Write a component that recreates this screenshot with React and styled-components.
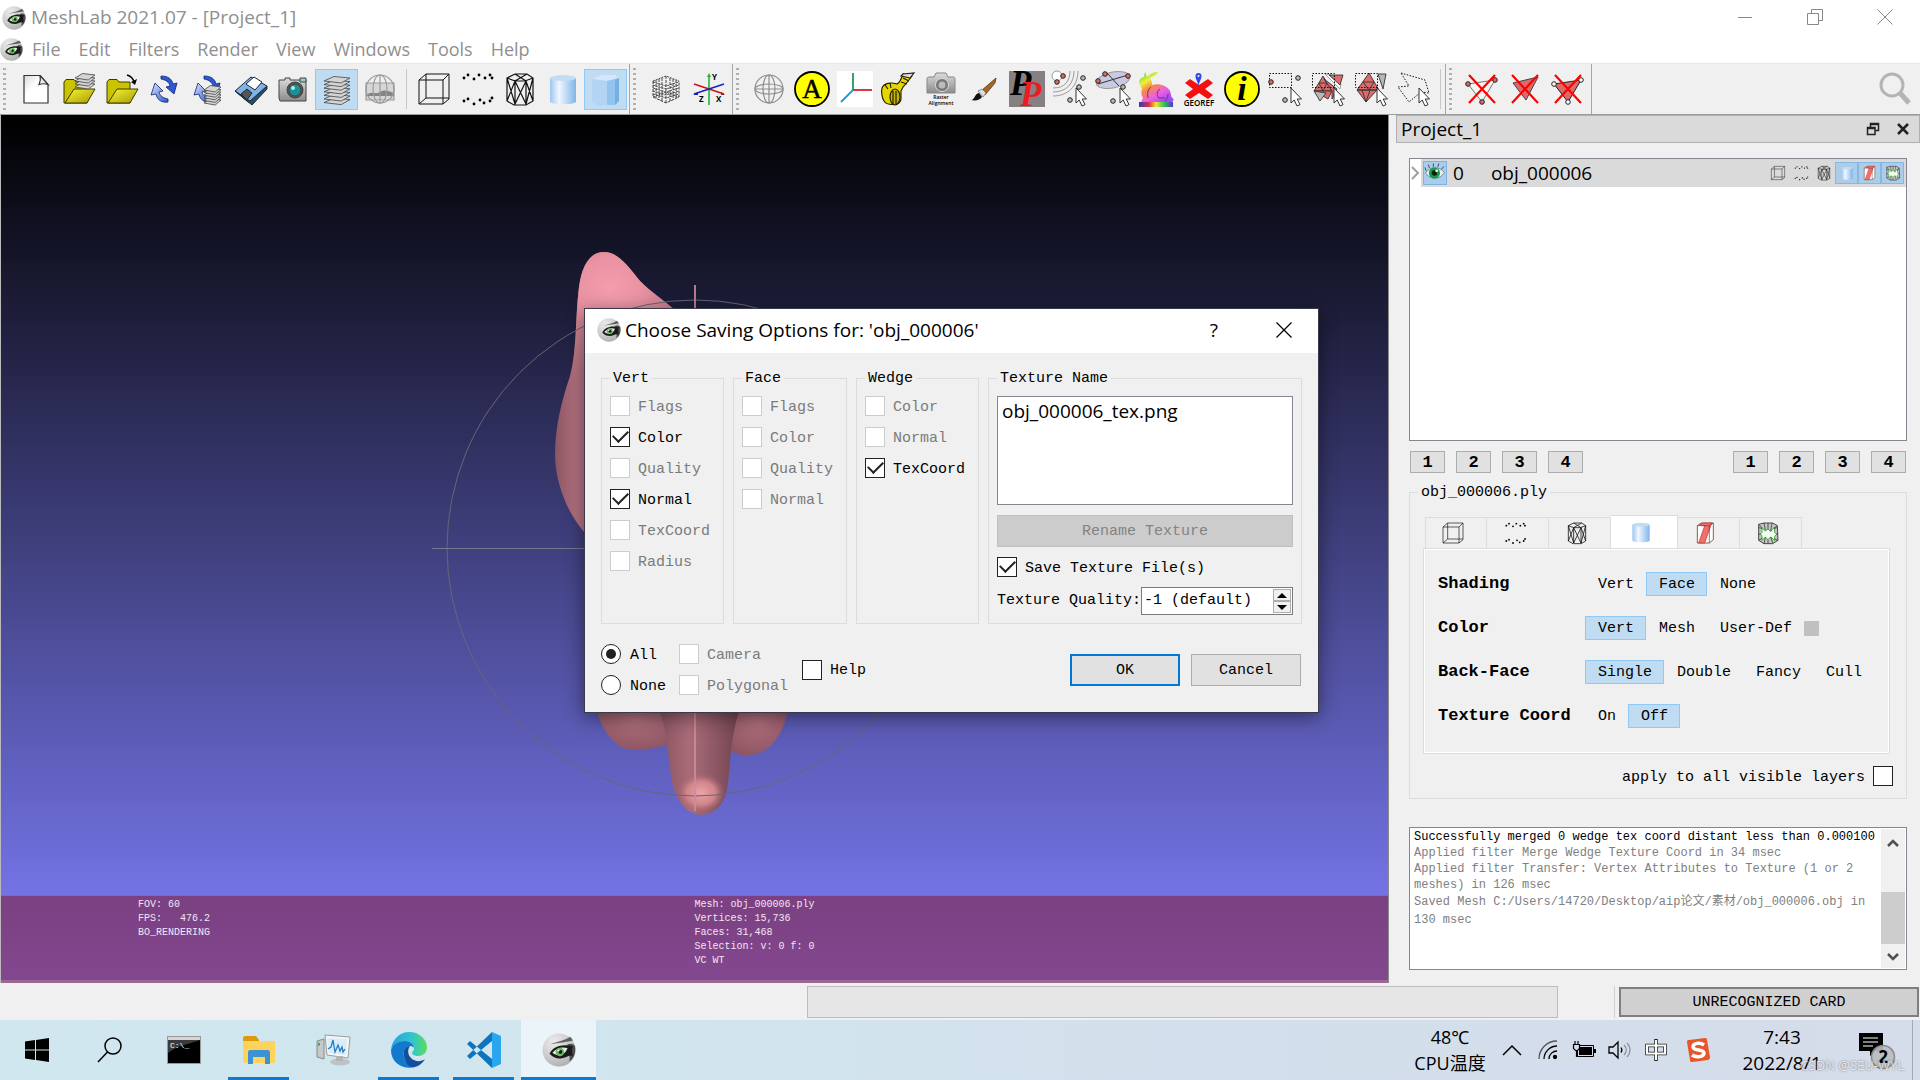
import { useState } from 'react';
import styled, { createGlobalStyle, css } from 'styled-components';

const GlobalStyle = createGlobalStyle`
  :root {
    --ff-ui: "Open Sans", "Noto Sans", "Noto Sans CJK SC", sans-serif;
    --ff-mono: "Liberation Mono", "Noto Sans CJK SC", monospace;
    --c-panel: #f0f0f0;
    --c-line: #dcdcdc;
    --c-select: #bfdcf3;
    --c-select-line: #90c8f6;
    --c-muted: #7b7b7b;
  }
  * {
    box-sizing: border-box;
  }
  body {
    margin: 0;
    background: var(--c-panel);
    color: #000;
    font: 15px/20px var(--ff-mono);
  }
  button, input {
    font: inherit;
    color: inherit;
    margin: 0;
  }
  svg {
    display: block;
    flex: none;
    overflow: visible;
  }
`;

/* ---------- shared drawings ---------- */

function EyeLogo({ size = 24 }) {
  return (
    <svg width={size} height={size} viewBox="0 0 36 36" aria-hidden="true">
      <defs>
        <radialGradient id="eyeSkin" cx=".35" cy=".25" r=".85">
          <stop offset="0" stopColor="#ececec" />
          <stop offset=".6" stopColor="#c9c9c9" />
          <stop offset="1" stopColor="#a9a9a9" />
        </radialGradient>
      </defs>
      <circle cx="18" cy="18" r="17.500" fill="url(#eyeSkin)" />
      <path d="M9 12C16 9 24 8 30 4l3 4c-7 2-15 2-24 4z" fill="#444" opacity=".8" />
      <path d="M27 12c4-1 6-1 8 2 1 7-1 13-6 16 1-5 0-8-3-10z" fill="#3a3a3a" opacity=".85" />
      <path d="M8 22c3-8 14-11 25-8-2 3-1 7 0 11-3-3-6 1-13 2-6 0-9-2-12-5z" fill="#1a1a1a" />
      <path d="M11 21c4-5 10-7 16-5-2 7-10 10-16 5z" fill="#e2eedf" />
      <circle cx="19" cy="20" r="4.500" fill="#6cb862" />
      <circle cx="19.500" cy="20" r="2" fill="#0c200c" />
      <circle cx="17.500" cy="18.500" r="1" fill="#fff" />
    </svg>
  );
}

const Pointer = ({ x = 24, y = 17 }) => (
  <path
    transform={`translate(${x} ${y})`}
    d="M0 0v15l3.200-3 2.800 6 3-1.400-2.800-5.600H10.500z"
    fill="#fff"
    stroke="#333"
    strokeWidth="1"
  />
);

const Node = ({ x, y, c = '#b8b8b8' }) => (
  <circle cx={x} cy={y} r="2.300" fill={c} stroke="#222" strokeWidth="1" />
);

const RED = '#dc6a6a';

const Sheets = ({ x = 0, y = 0, n = 6, step = 4, w = 26 }) => (
  <g transform={`translate(${x} ${y})`} fill="#d4d4d4" stroke="#444" strokeWidth=".8">
    {Array.from({ length: n }, (_, i) => n - 1 - i).map((i) => (
      <path key={i} d={`M0 ${i * step + 5}l${w * 0.38}-4.500L${w} ${i * step + 2}l${-w * 0.34} 5z`} />
    ))}
  </g>
);

const Folder = () => (
  <g stroke="#3a3a00" strokeWidth="1">
    <path d="M3 32V11l2-2.500h8l2 2.500h11v21z" fill="#c9c300" />
    <path d="M4 32l9-14h21l-8 14z" fill="url(#gold)" />
  </g>
);

const SyncArrows = () => (
  <g fill="url(#blueArrow)" stroke="#12236b" strokeWidth=".8">
    <path d="M14 5c7 0 11 3 12 8l4-1-3 11-8-7 4-1c-1-4-4-6-9-7z" fill="#2c58d6" />
    <path d="M21 31c-6 1-11-2-12-8l-5 1 4-12 8 8-4 1c1 4 4 6 9 7z" />
  </g>
);

const Cross = () => <path d="M5 4l26 28M31 4L5 32" stroke="#f00" strokeWidth="2.200" fill="none" />;

const Defs = styled.svg`
  position: absolute;
`;

function SharedGradients() {
  return (
    <Defs width="0" height="0" aria-hidden="true">
      <defs>
        <linearGradient id="gold" x1="0" y1="0" x2="1" y2="1">
          <stop offset="0" stopColor="#fbf53a" />
          <stop offset="1" stopColor="#a39d00" />
        </linearGradient>
        <linearGradient id="blueArrow" x1="0" y1="0" x2="1" y2="1">
          <stop offset="0" stopColor="#dbe8ff" />
          <stop offset="1" stopColor="#2a55cf" />
        </linearGradient>
        <linearGradient id="tube">
          <stop offset="0" stopColor="#9cc6ef" />
          <stop offset=".35" stopColor="#f0f7ff" />
          <stop offset="1" stopColor="#7fb5ea" />
        </linearGradient>
        <linearGradient id="rainbow">
          <stop offset="0" stopColor="#303bb5" />
          <stop offset=".3" stopColor="#e03050" />
          <stop offset=".5" stopColor="#f4e62a" />
          <stop offset=".75" stopColor="#2bc05a" />
          <stop offset="1" stopColor="#5a30c8" />
        </linearGradient>
        <linearGradient id="bunnyFill" x1="0" y1="0" x2=".7" y2="1">
          <stop offset="0" stopColor="#22d63c" />
          <stop offset=".3" stopColor="#f2ee3a" />
          <stop offset=".5" stopColor="#f58a4a" />
          <stop offset=".75" stopColor="#ef5fe0" />
          <stop offset="1" stopColor="#a04cf0" />
        </linearGradient>
        <linearGradient id="paper" x1="0" y1="0" x2="1" y2="1">
          <stop offset="0" stopColor="#d8d8d8" />
          <stop offset=".4" stopColor="#fff" />
        </linearGradient>
        <linearGradient id="metal" x1="0" y1="0" x2="0" y2="1">
          <stop offset="0" stopColor="#dcdcdc" />
          <stop offset="1" stopColor="#8c8c8c" />
        </linearGradient>
      </defs>
    </Defs>
  );
}

const art = {
  file: (
    <g stroke="#333" strokeWidth="1.200">
      <path d="M6 4.500h16l8 9v18.500H6z" fill="url(#paper)" />
      <path d="M22 4.500c1 4 0 7-1 9 3-1 6-1 9 0z" fill="#eee" />
    </g>
  ),
  openProject: (
    <>
      <Folder />
      <Sheets x={14} y={2} n={4} step={3} w={20} />
    </>
  ),
  importMesh: (
    <>
      <Folder />
      <path d="M23 4c4 1 6 3 7 7" fill="none" stroke="#000" strokeWidth="1.400" />
      <path d="M33 8l-2 6-4-3z" />
    </>
  ),
  reload: <SyncArrows />,
  reloadAll: (
    <>
      <SyncArrows />
      <Sheets x={14} y={14} n={6} step={2.6} w={17} />
    </>
  ),
  save: (
    <g stroke="#1c2a38" strokeWidth="1">
      <path d="M2 20L18 6l16 9-15 17-4-1z" fill="#7fb2e6" />
      <path d="M2 20l15 10 17-15v3L19 34z" fill="#2d4a66" />
      <path d="M13 13l8-7 8 5-7 8z" fill="#fff" />
      <path d="M8 23l6-5 5 4-5 7z" fill="#555" />
    </g>
  ),
  camera: (
    <g stroke="#444" strokeWidth="1">
      <path d="M3 9h6V7h5v2h16v21H4l-1-3z" fill="url(#metal)" />
      <path d="M24 7h6v4h-6z" fill="#8fd0c8" />
      <circle cx="19" cy="19" r="8" fill="#555" />
      <circle cx="19" cy="19" r="6" fill="#1e8f92" />
      <circle cx="17" cy="17" r="2" fill="#a9f0e8" stroke="none" />
    </g>
  ),
  layers: <Sheets x={5} y={5} n={7} step={3.6} />,
  rasterGlobe: (
    <g fill="none" stroke="#9a9a9a" strokeWidth="1.200">
      <path d="M4 12h28v17H4z" fill="#d6d6d6" />
      <path d="M4 24c7-5 9 0 14-3s8-1 14 1v3H4z" fill="#858585" stroke="none" />
      <circle cx="18" cy="18" r="14" />
      <ellipse cx="18" cy="18" rx="7" ry="14" />
      <path d="M18 4v28" />
    </g>
  ),
  box: (
    <path d="M3 9h24v24H3zM10 3h23v25M3 9l7-6M27 9l6-6M27 33l6-5M10 3v24h23M3 33l7-6" fill="none" stroke="#111" strokeWidth="1" />
  ),
  points: (
    <g fill="#000">
      {[[5, 7], [9, 4], [15, 8], [20, 4], [26, 7], [31, 4], [33, 7], [5, 30], [9, 28], [15, 33], [21, 29], [25, 32], [31, 30], [33, 27]].map(([x, y]) => (
        <circle key={`${x}-${y}`} cx={x} cy={y} r="1.400" />
      ))}
    </g>
  ),
  wire: (
    <path
      d="M5 7l8-4h12l6 4v23l-7 4H12l-7-4zM5 7l8 3h10l8-3M13 10v23M24 10v23M5 7l8 26L24 10l7 20M31 7l-7 26L13 10 5 30M13 3l11 7M25 3l-12 7"
      fill="none"
      stroke="#111"
      strokeWidth="1.200"
    />
  ),
  tube: (
    <>
      <path d="M5 7v24c3 3 23 3 26 0V7z" fill="url(#tube)" />
      <ellipse cx="18" cy="7" rx="13" ry="3" fill="#c3dcf6" />
    </>
  ),
  prism: (
    <>
      <path d="M4 8l9-4h14l4 3-12 3z" fill="#d3e6fa" />
      <path d="M4 8l15 2v24l-9 1-6-4z" fill="#b4d4f4" />
      <path d="M19 10l12-3v23l-4 4h-8z" fill="#93c3ef" />
      <path d="M27 9l4-2v23l-4 4z" fill="#78afe2" />
    </>
  ),
  grid: (
    <g fill="none" stroke="#333" strokeWidth=".9">
      <path d="M5 10v16l13 6 13-6V10M8 9v18M11 8v21M14 7v23M18 5v27M22 7v23M25 8v21M28 9v18" strokeDasharray="3 1" />
      <path d="M5 11l13 4 13-4M5 14l13 4 13-4M5 17l13 4 13-4M5 20l13 4 13-4M5 23l13 4 13-4M5 10l13-5 13 5M5 26l13-5 13 5" strokeDasharray="2 1" />
    </g>
  ),
  axes: (
    <g strokeWidth="1.600" fontSize="8" fontFamily="Open Sans, sans-serif" fontWeight="700">
      <path d="M18 4v30" stroke="#1fb53a" />
      <path d="M3 13l30 10" stroke="#c01818" />
      <path d="M33 13L3 23" stroke="#1e22c0" />
      <path d="M18 2l-2 4h4z" fill="#1fb53a" />
      <path d="M34 24l-4-3v3z" fill="#c01818" />
      <path d="M2 24l5-3v3z" fill="#1e22c0" />
      <text x="21" y="9">Y</text>
      <text x="25" y="31">X</text>
      <text x="8" y="31">Z</text>
    </g>
  ),
  globe: (
    <g fill="none" stroke="#8e8e8e" strokeWidth="1.200">
      <circle cx="18" cy="18" r="14" />
      <ellipse cx="18" cy="18" rx="6" ry="14" />
      <ellipse cx="18" cy="18" rx="14" ry="5" />
      <path d="M18 4v28M4 18h28" />
    </g>
  ),
  letterA: (
    <>
      <circle cx="18" cy="18" r="17" fill="#ff0" stroke="#000" strokeWidth="1.800" />
      <text x="18" y="27" textAnchor="middle" fontFamily="Liberation Serif, serif" fontSize="27" stroke="#000" strokeWidth=".5">A</text>
    </>
  ),
  triad: (
    <g fill="none" strokeWidth="1.800">
      <path d="M0 0h36v36H0z" fill="#fff" />
      <path d="M16 2v17" stroke="#1f9a55" />
      <path d="M16 19h19" stroke="#d8202c" />
      <path d="M16 19L4 31" stroke="#159be0" />
    </g>
  ),
  tape: (
    <g stroke="#1c1a00" strokeWidth="1.100">
      <path d="M2 17c2-5 9-6 15-4 4-2 4-6 6-10l9 2c-3 4-6 8-9 11l-2 4v8c0 7-14 7-17 2-2-3-3-9-2-13z" fill="#e6d600" />
      <ellipse cx="15" cy="26" rx="5" ry="8" fill="#c2b400" />
      <path d="M23 7l6 3M21 11l6 2M5 14l3 4M10 12l1 5M13 20v13M16 20v13" fill="none" />
      <path d="M23 3l11-1-4 5-9-2z" fill="#ddd" />
    </g>
  ),
  raster: (
    <>
      <path d="M4 8c0-2 1-2 3-2h4l2-4h10l2 4h4c2 0 3 0 3 2v14H4z" fill="url(#metal)" stroke="#888" />
      <circle cx="19" cy="14" r="6.500" fill="#777" stroke="#ddd" />
      <circle cx="19" cy="14" r="3.500" fill="#bbb" />
      <g fontFamily="Open Sans, sans-serif" fontSize="5" fontWeight="600" textAnchor="middle">
        <text x="18" y="28">Raster</text>
        <text x="18" y="34">Alignment</text>
      </g>
    </>
  ),
  brush: (
    <>
      <path d="M15 20L30 7l-1 5-10 12z" fill="#a5652a" stroke="#5a3210" strokeWidth=".8" />
      <path d="M12 20l4-2 4 4-3 4z" fill="#ddd" stroke="#777" strokeWidth=".8" />
      <path d="M5 29c4 0 3-6 8-7l3 4c-2 3-6 4-11 3z" fill="#111" />
    </>
  ),
  pp: (
    <g fontFamily="Liberation Serif, serif" fontWeight="700" fontStyle="italic">
      <path d="M0 0h36v36H0z" fill="#868083" />
      <text x="1" y="24" fontSize="35">P</text>
      <text x="11" y="35" fontSize="35" fill="#ec1c24">P</text>
    </g>
  ),
  paintPoints: (
    <>
      <g fill="none" stroke="#999" strokeWidth="1">
        <path d="M18 0c0 10-5 17-17 17M22 0c0 12-7 21-21 21M26 0c0 15-10 25-25 25" />
        <circle cx="5" cy="5" r="5" fill="#fff" />
      </g>
      <Node x={11} y={5} c={RED} />
      <Node x={5} y={11} c={RED} />
      <Node x={31} y={7} />
      <Node x={27} y={16} />
      <Node x={18} y={29} />
      <Pointer />
    </>
  ),
  fitPlane: (
    <>
      <ellipse cx="18" cy="9" rx="17" ry="8" transform="rotate(-12 18 9)" fill="#c9c9e2" stroke="#999" />
      <path d="M3 13l30-9M12 2l12 13" stroke="#333" fill="none" />
      <Node x={3} y={10} c={RED} />
      <Node x={10} y={3} c={RED} />
      <Node x={33} y={5} c={RED} />
      <Node x={28} y={16} />
      <Node x={18} y={30} />
      <Pointer x={25} />
    </>
  ),
  bunny: (
    <>
      <path
        d="M1 12c0-4 3-6 5-6l1-5 2 5c3-3 6-5 11-5-1 3-5 5-8 6 2 3 2 5 2 7 6-2 15 0 18 6 1 3 1 5 2 7 2 0 2 3 0 4H3l2-4c-2-3-2-6-1-9z"
        fill="url(#bunnyFill)"
      />
      <path d="M13 16c-3 2-4 6-3 11M22 18c-3 2-4 6-1 9h6M30 23c0 3-1 5-3 7" fill="none" stroke="#7a2c7a" strokeWidth="1" />
      <path d="M1 31h34v5H1z" fill="url(#rainbow)" />
    </>
  ),
  georef: (
    <>
      <path d="M9 8l9 6 9-6 5 4-8 6 8 6-5 4-9-6-9 6-5-4 8-6-8-6z" fill="#f50f0f" />
      <path d="M17.500 15c-1-5-3-7-3-10a3 3 0 016 0c0 3-2 5-3 10z" fill="#2c49e8" />
      <circle cx="17.500" cy="5" r="1" fill="#fff" />
      <text x="18" y="35" textAnchor="middle" fontFamily="Open Sans, sans-serif" fontSize="8" fontWeight="600">GEOREF</text>
    </>
  ),
  info: (
    <>
      <circle cx="18" cy="18" r="17" fill="#ff0" stroke="#000" strokeWidth="1.800" />
      <text x="18" y="29" textAnchor="middle" fontFamily="Liberation Serif, serif" fontSize="34" fontWeight="700" fontStyle="italic">i</text>
    </>
  ),
  selectVerts: (
    <>
      <path d="M2.500 2.500h22v14h-22z" fill="none" stroke="#111" strokeDasharray="1.500 1.500" />
      <Node x={4} y={11} c={RED} />
      <Node x={31} y={7} />
      <Node x={18} y={29} />
      <Pointer />
    </>
  ),
  selectFaces: (
    <>
      <g fill={RED} stroke="#333" strokeWidth=".9">
        <path d="M13 5L4 20h18z" />
        <path d="M15 3l15 15 1-5-10-9z" fill="#fff" stroke="#999" />
        <path d="M19 4h14l-3 10z" />
        <path d="M22 20l-8-12 13 10-5 10z" />
        <path d="M4 20h18l-4 8z" />
        <path d="M4 20l6 10 6-8z" fill="#b8b8b8" />
        <path d="M9 12h8l-4 8z" fill="none" />
      </g>
      <path d="M2.500 2.500h22v14h-22z" fill="none" stroke="#111" strokeDasharray="1.500 1.500" />
      <Pointer />
    </>
  ),
  selectConnected: (
    <>
      <g fill={RED} stroke="#333" strokeWidth=".9">
        <path d="M16 2L4 19h22zM4 19h20L13 31z" />
        <path d="M10 11h11l-5 8zM9 19l4 12 4-12" fill="none" />
        <path d="M25 3h8l-3 15z" fill="#b8b8b8" />
      </g>
      <path d="M2.500 2.500h22v14h-22z" fill="none" stroke="#111" strokeDasharray="1.500 1.500" />
      <Pointer />
    </>
  ),
  lasso: (
    <>
      <path d="M5 2l24 7 4 13-8-1-12 10L2 16l11-1z" fill="none" stroke="#111" strokeDasharray="1.500 1.500" />
      <Pointer x={23} />
    </>
  ),
  deleteVerts: (
    <>
      <path d="M4 13L31 9 18 31z" fill="#f4f4f4" stroke="#777" />
      <Node x={4} y={13} c={RED} />
      <Node x={31} y={9} c={RED} />
      <Node x={18} y={31} c={RED} />
      <Cross />
    </>
  ),
  deleteFaces: (
    <>
      <path d="M6 12L31 6 19 29z" fill={RED} stroke="#444" />
      <Cross />
    </>
  ),
  deleteBoth: (
    <>
      <path d="M4 13L31 9 18 31z" fill={RED} stroke="#222" />
      <Node x={4} y={13} c="#fff" />
      <Node x={31} y={9} c="#fff" />
      <Node x={18} y={31} c="#fff" />
      <Cross />
    </>
  ),
  edges: (
    <>
      <path d="M5 7l6-4h18v25l-6 5H5z" fill="#fff" stroke="#6b3a20" strokeWidth="1.200" />
      <path d="M14 3h13l-2 4-9 26H7L16 7l-8-1z" fill="#f07070" stroke="#c22" />
      <path d="M5 7h18v26M23 7l6-4" fill="none" stroke="#6b3a20" />
    </>
  ),
  boundary: (
    <>
      <path d="M4 5l8-2h13l7 4 1 22-8 5H12l-8-5z" fill="#c4c4c4" stroke="#333" strokeWidth="1.300" />
      <path d="M9 10l5 5 4-3 4 4 6-7v8l3 3-3 3v6l-6-5-4 4-4-4-5 5v-7l-3-2 3-3z" fill="#f2fff0" stroke="#3fae3a" strokeWidth="1.500" />
      <path d="M4 10l5 1M12 3l2 11M18 3v9M24 3l-2 12M32 10l-5 1M33 19l-3 1M4 20l3-1M12 34l2-9M18 34v-6M25 33l-3-9M4 5l5 5M32 7l-4 3M4 29l5-3M33 29l-5-2" stroke="#222" fill="none" />
    </>
  ),
  eye: (
    <>
      <path d="M1 18C8 6 26 5 35 17 28 30 9 31 1 18z" fill="#dff3ea" stroke="#446" />
      <circle cx="17" cy="18" r="10" fill="#1a9a4a" />
      <circle cx="17" cy="18" r="5" fill="#04250f" />
      <circle cx="21" cy="14" r="2.500" fill="#fff" />
      <path d="M2 14L0 8M8 9L6 3M15 7V1M23 7l2-6M30 11l4-5" stroke="#334" strokeWidth="1.500" />
    </>
  ),
};

const Icon = ({ name, size = 36 }) => (
  <svg width={size} height={size} viewBox="0 0 36 36" aria-hidden="true">
    {art[name]}
  </svg>
);

/* ---------- window frame ---------- */

const Screen = styled.div`
  min-height: 100vh;
  display: flex;
  flex-direction: column;
`;

const TitleBar = styled.header`
  height: 35px;
  padding-left: 2px;
  display: flex;
  align-items: center;
  background: #fff;
  color: #8f8f8f;
  font: 19px/24px var(--ff-ui);
`;

const Title = styled.h1`
  margin: 0;
  padding: 0 0 2px 5px;
  flex: 1;
  font: inherit;
`;

const FrameButton = styled.button`
  width: 70px;
  height: 35px;
  padding: 0 0 2px;
  display: grid;
  place-items: center;
  border: 0;
  background: none;
`;

const MenuBar = styled.nav`
  height: 29px;
  display: flex;
  align-items: center;
  gap: 9px;
  background: #fff;
  border-bottom: 1px solid #e8e8e8;
  color: #8f8f8f;
  font: 18px/24px var(--ff-ui);
`;

const MenuList = styled.div`
  display: flex;
  gap: 18px;
`;

const MenuItem = styled.button`
  border: 0;
  padding: 0;
  background: none;
`;

const ToolBar = styled.div`
  height: 51px;
  display: flex;
  align-items: center;
  border-bottom: 1px solid #9c9c9c;
`;

const ToolGroup = styled.div`
  height: 100%;
  display: flex;
  align-items: center;
  padding: 0 2px 0 3px;
  border-right: 1px solid #a6a6a6;

  &::before {
    content: '';
    width: 3px;
    height: 42px;
    margin-right: 8px;
    background: repeating-linear-gradient(#b0b0b0 0 2px, transparent 2px 5px);
  }
`;

const ToolButton = styled.button`
  width: 43px;
  height: 41px;
  padding: 0;
  display: grid;
  place-items: center;
  border: 1px solid ${(props) => (props.$active ? 'var(--c-select-line)' : 'transparent')};
  background: ${(props) => (props.$active ? 'var(--c-select)' : 'none')};
`;

const ToolRule = styled.span`
  width: 1px;
  height: 40px;
  margin: 0 5px;
  background: #c8c8c8;

  &:last-child {
    margin-right: 2px;
  }
`;

const ToolSearch = styled.button`
  margin-left: auto;
  width: 50px;
  padding: 0;
  display: grid;
  place-items: center;
  border: 0;
  background: none;
`;

const Workspace = styled.main`
  flex: 1;
  display: flex;
  gap: 7px;
`;

/* ---------- 3d view ---------- */

const Viewport = styled.section`
  position: relative;
  flex: 1;
  display: flex;
  flex-direction: column;
  justify-content: flex-end;
  overflow: hidden;
  border: 1px solid #8a8a8a;
  border-width: 0 1px;
  border-left-color: #bbb;
  background: linear-gradient(#000, #8080ff);
`;

const Scene = styled.svg`
  position: absolute;
  inset: 0;
  width: 100%;
  height: 100%;
`;

const InfoStrip = styled.div`
  position: relative;
  min-height: 88px;
  padding: 2px 137px;
  display: grid;
  grid-template-columns: 1fr 1fr;
  background: rgb(134 0 0 / 0.44);
  border-top: 1px solid #8a68a8;
  border-bottom: 3px solid #9a6892;
  color: #f3e6f3;
  font-size: 10px;
  line-height: 14px;
`;

const InfoText = styled.pre`
  margin: 0;
  font: inherit;
`;

const UPPER_BODY = 'M579 287C582 265 590 252 604 252C618 252 628 266 640 281C651 292 662 299 680 314V540H592C572 522 556 490 555 456C555 425 562 400 570 376C577 350 575 320 579 287Z';

function Model() {
  return (
    <Scene viewBox="0 115 1389 868" preserveAspectRatio="xMidYMid slice" aria-hidden="true">
      <defs>
        <radialGradient id="earSkin" gradientUnits="userSpaceOnUse" cx="610" cy="290" r="95">
          <stop offset="0" stopColor="#f59dad" />
          <stop offset=".35" stopColor="#e892a2" />
          <stop offset="1" stopColor="#c07a89" stopOpacity="0" />
        </radialGradient>
        <linearGradient id="sideSkin" gradientUnits="userSpaceOnUse" x1="553" y1="0" x2="610" y2="0">
          <stop offset="0" stopColor="#855260" />
          <stop offset=".4" stopColor="#b3717f" />
          <stop offset="1" stopColor="#c07b8a" />
        </linearGradient>
        <linearGradient id="trunkSkin" x1="0" x2="1">
          <stop offset="0" stopColor="#86505e" />
          <stop offset=".4" stopColor="#aa6c79" />
          <stop offset="1" stopColor="#6e414d" />
        </linearGradient>
        <radialGradient id="tipSkin">
          <stop offset="0" stopColor="#eba5a8" />
          <stop offset=".6" stopColor="#cf8489" />
          <stop offset="1" stopColor="#a9656e" stopOpacity="0" />
        </radialGradient>
        <radialGradient id="footSkin" cx=".5" cy=".4" r=".7">
          <stop offset="0" stopColor="#b06f7d" />
          <stop offset="1" stopColor="#8a525f" />
        </radialGradient>
      </defs>
      <path d={UPPER_BODY} fill="url(#sideSkin)" />
      <path d={UPPER_BODY} fill="url(#earSkin)" />
      <path d="M594 700C600 730 615 750 634 750C650 750 660 746 672 744L680 700Z" fill="url(#footSkin)" />
      <path d="M725 700L730 750C740 758 760 758 773 743C782 733 786 722 790 700Z" fill="url(#footSkin)" />
      <path d="M656 700C670 735 667 765 674 790C680 806 690 815 702 815C714 814 724 805 727 790C731 768 728 745 742 700Z" fill="url(#trunkSkin)" />
      <ellipse cx="701" cy="793" rx="24" ry="20" fill="url(#tipSkin)" />
      <circle cx="695" cy="548" r="248" fill="none" stroke="#666676" strokeWidth="1" />
      <path d="M432 548.500h526" stroke="#77778a" strokeWidth="1" />
      <path d="M695 285v526" stroke="#cf8c9a" strokeWidth="2" opacity=".85" />
    </Scene>
  );
}

/* ---------- form pieces ---------- */

const Box = styled.input`
  appearance: none;
  flex: none;
  width: 20px;
  height: 20px;
  display: grid;
  place-items: center;
  border: 1px solid #222;
  border-radius: ${(props) => (props.type === 'radio' ? '50%' : 0)};
  background: #fff;

  &:disabled {
    border-color: #ccc;
  }

  &[type='checkbox']:checked::after {
    content: '';
    width: 13px;
    height: 7px;
    margin-bottom: 5px;
    border: solid #222;
    border-width: 0 0 2px 2px;
    transform: rotate(-45deg);
  }

  &[type='radio']:checked::after {
    content: '';
    width: 10px;
    height: 10px;
    border-radius: 50%;
    background: #222;
  }
`;

const Field = styled.label`
  height: 20px;
  display: flex;
  align-items: center;
  gap: ${(props) => props.$gap || 8}px;
  color: ${(props) => (props.$disabled ? 'var(--c-muted)' : '#000')};
  white-space: nowrap;

  span {
    padding-top: 3px;
  }
`;

function Check({ label, disabled, defaultChecked, type = 'checkbox', ...rest }) {
  return (
    <Field $disabled={disabled} $gap={type === 'radio' ? 9 : 8}>
      <Box type={type} disabled={disabled} defaultChecked={defaultChecked} {...rest} />
      <span>{label}</span>
    </Field>
  );
}

const Group = styled.fieldset`
  min-width: 0;
  margin: 0;
  padding: 8px;
  border: 1px solid var(--c-line);

  legend {
    padding: 2px 3px 0;
    line-height: 18px;
  }
`;

const Stack = styled.div`
  display: flex;
  flex-direction: column;
  gap: ${(props) => props.$gap || 11}px;
`;

/* ---------- dock ---------- */

const Dock = styled.aside`
  width: 524px;
  display: flex;
  flex-direction: column;
`;

const DockTitle = styled.h2`
  height: 28px;
  margin: 0;
  padding: 0 10px 0 4px;
  display: flex;
  align-items: center;
  gap: 17px;
  border: 1px solid #b0b0b0;
  background: #dadada;
  font: 19px/24px var(--ff-ui);

  span {
    flex: 1;
  }
`;

const BareButton = styled.button`
  padding: 0;
  border: 0;
  background: none;
`;

const DockBody = styled.div`
  flex: 1;
  padding: 15px 13px 13px;
  display: flex;
  flex-direction: column;
`;

const LayerTree = styled.div`
  flex: 1;
  min-height: 120px;
  border: 1px solid #828790;
  background: #fff;
`;

const LayerRow = styled.div`
  height: 28px;
  padding-right: 2px;
  display: flex;
  align-items: center;
  background: linear-gradient(90deg, #fff 11px, #dadada 11px);
  font: 19px/24px var(--ff-ui);
`;

const LayerEye = styled.button`
  width: 24px;
  height: 24px;
  margin: 0 6px 0 3px;
  padding: 0;
  display: grid;
  place-items: center;
  border: 1px solid #7fb2dc;
  background: #a9cdec;
`;

const LayerName = styled.span`
  flex: 1;
  margin-left: 27px;
`;

const LayerTool = styled.button`
  width: 23px;
  height: 22px;
  padding: 0;
  display: grid;
  place-items: center;
  border: 1px solid ${(props) => (props.$active ? '#86b9e2' : 'transparent')};
  background: ${(props) => (props.$active ? '#abcdea' : 'none')};
`;

const SlotRow = styled.div`
  display: flex;
  gap: 11px;
  padding: 10px 1px 9px;
`;

const SlotButton = styled.button`
  width: 35px;
  height: 22px;
  padding: 1px 0 0;
  border: 1px solid #adadad;
  background: #e1e1e1;
  font-size: 17px;
  font-weight: 700;
  line-height: 20px;

  &:nth-child(5) {
    margin-left: auto;
  }
`;

const RenderGroup = styled(Group)`
  padding: 13px 16px 12px 13px;

  > legend {
    margin-left: -5px;
  }
`;

const TabRow = styled.div`
  display: flex;
  align-items: flex-end;
  padding-left: 2px;
`;

const Tab = styled.button`
  width: 62px;
  height: 31px;
  padding: 0 6px 0 0;
  display: grid;
  place-items: center;
  border: 1px solid var(--c-line);
  border-width: 1px 1px 0 0;
  background: none;

  &:first-child {
    border-left-width: 1px;
  }

  ${(props) =>
    props.$active &&
    css`
      width: 67px;
      height: 33px;
      background: #fff;
    `}
`;

const TabPane = styled.div`
  padding: 13px 12px 15px 14px;
  border: 1px solid var(--c-line);
  box-shadow: inset 0 0 0 1px #fff;
`;

const OptionRow = styled.div`
  height: 44px;
  display: flex;
  align-items: center;

  strong {
    width: 147px;
    font-size: 17px;
  }
`;

const Option = styled.button`
  height: 24px;
  padding: 2px 11px 0 12px;
  border: 1px solid ${(props) => (props.$active ? 'var(--c-select-line)' : 'transparent')};
  background: ${(props) => (props.$active ? 'var(--c-select)' : 'none')};
  line-height: 20px;
`;

const Swatch = styled.span`
  width: 15px;
  height: 15px;
  background: #c0c0c0;
`;

const ApplyRow = styled.div`
  display: flex;
  justify-content: flex-end;
  padding-top: 12px;
  margin-right: -3px;

  label {
    flex-direction: row-reverse;
  }
`;

const Log = styled.div`
  height: 143px;
  margin-top: 28px;
  padding: 1px 3px 1px 4px;
  display: flex;
  justify-content: space-between;
  border: 1px solid #828790;
  background: #fff;
  color: #808080;
  font-size: 12px;
  line-height: 16px;
  white-space: pre;

  p {
    margin: 0;
  }

  p:last-child {
    line-height: 18px;
  }
`;

const FreshLine = styled.p`
  color: #000;
`;

const ScrollBar = styled.div`
  width: 24px;
  margin-right: -2px;
  display: grid;
  grid-template-rows: 28px 35px 52px 1fr;
  justify-items: center;
  align-items: center;
  background: #f0f0f0;

  svg:last-child {
    grid-row: 4;
  }
`;

const Thumb = styled.span`
  grid-row: 3;
  width: 100%;
  height: 100%;
  background: #cdcdcd;
`;

/* ---------- status bar and taskbar ---------- */

const StatusBar = styled.footer`
  height: 37px;
  padding: 3px 1px 2px;
  display: flex;
  align-items: center;
  justify-content: flex-end;
`;

const Progress = styled.div`
  width: 751px;
  height: 32px;
  border: 1px solid #bcbcbc;
  background: #e6e6e6;
`;

const StatusRule = styled.span`
  width: 1px;
  height: 32px;
  margin: 0 4px 0 56px;
  background: #d0d0d0;
`;

const CardButton = styled.button`
  width: 300px;
  height: 30px;
  padding: 2px 0 0;
  border: 2px solid #7f7f7f;
  background: #d0d0d0;
`;

const TaskBar = styled.nav`
  position: relative;
  height: 60px;
  display: flex;
  background: linear-gradient(90deg, #d0e7ef, #d1e5ee 35%, #d3dfec 65%, #d5dcea);
  font: 18px/26px var(--ff-ui);
`;

const TaskButton = styled.button`
  width: ${(props) => (props.$narrow ? 73 : 75)}px;
  height: 60px;
  padding: 0;
  display: grid;
  place-items: center;
  border: 0;
  background: ${(props) => (props.$current ? '#eaf4f9' : 'none')};
  box-shadow: ${(props) => (props.$current ? 'inset 0 -3px #0f78cf' : 'none')};
  ${(props) =>
    props.$open &&
    css`
      background: linear-gradient(#0f78cf, #0f78cf) 50% 100% / 61px 3px no-repeat;
    `}
`;

const Tray = styled.div`
  margin-left: auto;
  display: flex;
  align-items: center;
`;

const TrayItem = styled.button`
  width: ${(props) => props.$width || 36}px;
  height: 60px;
  padding: 0;
  display: grid;
  place-items: center;
  align-content: center;
  border: 0;
  background: none;
`;

const ClockItem = styled(TrayItem)`
  font-size: 19px;
`;

const DesktopEdge = styled.span`
  width: 8px;
  height: 60px;
  border-left: 1px solid #a3abb8;
`;

const Watermark = styled.span`
  position: absolute;
  right: 16px;
  bottom: 6px;
  color: rgb(255 255 255 / 0.75);
  font: 13px/18px var(--ff-ui);
  text-shadow: 0 0 2px rgb(90 90 90 / 0.9);
`;

const taskIcons = {
  start: (
    <svg width="24" height="24" viewBox="0 0 24 24">
      <path d="M0 3.500l10-1.400v9.400H0zM11 2l13-2v11.500H11zM0 12.500h10v9.400L0 20.500zM11 12.500h13V24l-13-2z" />
    </svg>
  ),
  search: (
    <svg width="24" height="26" viewBox="0 0 24 26" fill="none" stroke="#000" strokeWidth="1.500">
      <circle cx="15" cy="9" r="8" />
      <path d="M9.500 15L0 25" />
    </svg>
  ),
  cmd: (
    <svg width="34" height="28" viewBox="0 0 34 28">
      <path d="M.5.500h33v27H.5z" fill="#000" stroke="#999" />
      <path d="M1 1h32v3H1z" fill="#d6d6d6" />
      <path d="M1 4h32c-10 4-22 5-32 13z" fill="#3b3b3b" />
      <text x="3" y="12" fill="#fff" fontSize="8" fontFamily="Liberation Mono, monospace">C:\_</text>
    </svg>
  ),
  explorer: (
    <svg width="34" height="30" viewBox="0 0 34 30">
      <path d="M1 3c0-1 1-2 2-2h11l3 4v6H1z" fill="#dd9a0c" />
      <path d="M1 6h31c1 0 1 1 1 1v19c0 2-1 2-2 2H3c-1 0-2 0-2-2z" fill="#fdd35c" />
      <path d="M6 29V17c0-1 1-2 2-2h18c1 0 2 1 2 2v12h-5v-7H11v7z" fill="#3b93d6" />
    </svg>
  ),
  monitor: (
    <svg width="36" height="32" viewBox="0 0 36 32">
      <path d="M1 7l7-2v20l-7-2z" fill="#c7c9c8" stroke="#8a8a8a" />
      <path d="M2 9l2-.5v3l-2 .5z" fill="#49b03a" />
      <path d="M9 1l25 2-2 21-21-3z" fill="#f4f6f7" stroke="#9c9c9c" />
      <path d="M11 4l20 1-1 16-17-2z" fill="#d9ecf7" />
      <path d="M12 15l3-2 2-7 2 12 3-7 2 6 2-4 1 5 2-3" fill="none" stroke="#1f7fc4" strokeWidth="1.300" />
      <ellipse cx="24" cy="28" rx="10" ry="3.500" fill="#bfc3c5" />
      <path d="M20 22h7v5h-7z" fill="#b2b5b6" />
    </svg>
  ),
  edge: (
    <svg width="36" height="36" viewBox="0 0 36 36">
      <defs>
        <linearGradient id="edgeTop">
          <stop offset="0" stopColor="#2a9fe0" />
          <stop offset=".6" stopColor="#31c7cb" />
          <stop offset="1" stopColor="#5cdc5c" />
        </linearGradient>
      </defs>
      <path d="M0 18C1 7 9 0 18 0c11 0 18 8 18 15 0 6-4 9-9 9-4 0-6-2-6-3s2-2 2-5c0-4-4-7-9-7C8 9 2 13 0 18z" fill="url(#edgeTop)" />
      <path d="M0 18c2-6 8-9 14-9 5 0 9 3 9 7 0 0-1-2-4-2-6 0-8 7-5 13 2 4 6 7 10 8-12 3-24-4-24-17z" fill="#1379cf" />
      <path d="M14 27c-3-6-1-13 5-13-3 4-2 9 1 12 4 4 10 4 14 1-3 5-8 9-14 8-3-1-5-4-6-8z" fill="#114f9c" />
    </svg>
  ),
  code: (
    <svg width="36" height="36" viewBox="0 0 36 36">
      <path d="M1 12l3-3 22 18v9zM1 24l3 3L26 9V0z" fill="#0d74bd" />
      <path d="M26 0l9 4v28l-9 4z" fill="#2aa5ee" />
    </svg>
  ),
};

/* ---------- save dialog ---------- */

const DialogWindow = styled.section`
  position: absolute;
  left: 584px;
  top: 308px;
  width: 735px;
  border: 1px solid #3a3a4c;
  background: var(--c-panel);
  box-shadow: 0 4px 18px rgb(0 0 0 / 0.45);
`;

const DialogTitle = styled.header`
  height: 44px;
  padding: 0 26px 2px 12px;
  display: flex;
  align-items: center;
  gap: 4px;
  background: #fff;
  font: 19px/24px var(--ff-ui);

  h2 {
    margin: 0;
    flex: 1;
    font: inherit;
  }

  button:last-child {
    margin-left: 54px;
  }
`;

const DialogBody = styled.form`
  padding: 15px 16px 17px;
`;

const GroupRow = styled.div`
  display: grid;
  grid-template-columns: 123px 114px 123px 1fr;
  gap: 9px;
  min-height: 256px;
`;

const TextureList = styled.div`
  height: 109px;
  padding: 1px 4px;
  border: 1px solid #828790;
  background: #fff;
  font: 19px/26px var(--ff-ui);
`;

const PushButton = styled.button`
  width: ${(props) => (props.$wide ? '100%' : '110px')};
  height: 32px;
  padding: 2px 0 0;
  border: 1px solid #adadad;
  background: #e1e1e1;

  &:disabled {
    border-color: #bfbfbf;
    background: #ccc;
    color: #838383;
  }

  ${(props) =>
    props.$primary &&
    css`
      border: 2px solid #0078d7;
    `}
`;

const QualityRow = styled.div`
  display: flex;
  align-items: center;
`;

const SpinBox = styled.div`
  flex: 1;
  min-width: 0;
  height: 28px;
  padding: 1px;
  display: flex;
  border: 1px solid #7a7a7a;
  background: #fff;

  input {
    flex: 1;
    min-width: 0;
    padding: 0 0 0 1px;
    border: 0;
    background: none;
  }
`;

const Steps = styled.div`
  width: 18px;
  display: grid;
  grid-template-rows: 1fr 1fr;

  button {
    padding: 0;
    display: grid;
    place-items: center;
    border: 1px solid #adadad;
    background: #f0f0f0;
  }
`;

const DialogFooter = styled.div`
  margin-top: 20px;
  display: flex;
  align-items: center;

  > label {
    margin-right: auto;
  }
`;

const Choices = styled.div`
  display: grid;
  grid-template-columns: 78px 123px;
  gap: 11px 0;
`;

const Buttons = styled.div`
  display: flex;
  gap: 11px;
  padding-right: 1px;
`;

const saveGroups = [
  { title: 'Vert', items: ['Flags', 'Color', 'Quality', 'Normal', 'TexCoord', 'Radius'], on: ['Color', 'Normal'] },
  { title: 'Face', items: ['Flags', 'Color', 'Quality', 'Normal'], on: [] },
  { title: 'Wedge', items: ['Color', 'Normal', 'TexCoord'], on: ['TexCoord'] },
];

function SaveDialog() {
  return (
    <DialogWindow role="dialog" aria-labelledby="save-title">
      <DialogTitle>
        <EyeLogo size={24} />
        <h2 id="save-title">Choose Saving Options for: 'obj_000006'</h2>
        <BareButton type="button">?</BareButton>
        <BareButton type="button" aria-label="Close">
          <svg width="16" height="16" viewBox="0 0 16 16">
            <path d="M.5.500l15 15M15.500.500l-15 15" stroke="#000" strokeWidth="1.200" />
          </svg>
        </BareButton>
      </DialogTitle>
      <DialogBody>
        <GroupRow>
          {saveGroups.map((group) => (
            <Group key={group.title}>
              <legend>{group.title}</legend>
              <Stack>
                {group.items.map((item) => (
                  <Check key={item} label={item} disabled={!group.on.includes(item)} defaultChecked={group.on.includes(item)} />
                ))}
              </Stack>
            </Group>
          ))}
          <Group>
            <legend>Texture Name</legend>
            <Stack $gap={10}>
              <TextureList>obj_000006_tex.png</TextureList>
              <PushButton $wide type="button" disabled>
                Rename Texture
              </PushButton>
              <Check label="Save Texture File(s)" defaultChecked />
              <QualityRow>
                <label htmlFor="quality">Texture Quality:</label>
                <SpinBox>
                  <input id="quality" type="text" defaultValue="-1 (default)" />
                  <Steps>
                    <button type="button" aria-label="Increase">
                      <svg width="10" height="5" viewBox="0 0 10 5"><path d="M0 5l5-5 5 5z" /></svg>
                    </button>
                    <button type="button" aria-label="Decrease">
                      <svg width="10" height="5" viewBox="0 0 10 5"><path d="M0 0l5 5 5-5z" /></svg>
                    </button>
                  </Steps>
                </SpinBox>
              </QualityRow>
            </Stack>
          </Group>
        </GroupRow>
        <DialogFooter>
          <Choices>
            <Check type="radio" name="preset" label="All" defaultChecked />
            <Check label="Camera" disabled />
            <Check type="radio" name="preset" label="None" />
            <Check label="Polygonal" disabled />
          </Choices>
          <Check label="Help" />
          <Buttons>
            <PushButton $primary type="button">OK</PushButton>
            <PushButton type="button">Cancel</PushButton>
          </Buttons>
        </DialogFooter>
      </DialogBody>
    </DialogWindow>
  );
}

/* ---------- page ---------- */

const menus = ['File', 'Edit', 'Filters', 'Render', 'View', 'Windows', 'Tools', 'Help'];

const toolGroups = [
  ['file', 'openProject', 'importMesh', 'reload', 'reloadAll', 'save', 'camera', 'layers', 'rasterGlobe', null, 'box', 'points', 'wire', 'tube', 'prism'],
  ['grid', 'axes'],
  ['globe', 'letterA', 'triad', 'tape', 'raster', 'brush', 'pp', 'paintPoints', 'fitPlane', 'bunny', 'georef', 'info', 'selectVerts', 'selectFaces', 'selectConnected', 'lasso', null],
  ['deleteVerts', 'deleteFaces', 'deleteBoth'],
];
const activeTools = ['layers', 'prism'];

const renderTabs = ['box', 'points', 'wire', 'tube', 'edges', 'boundary'];

const renderOptions = [
  { name: 'Shading', options: ['Vert', 'Face', 'None'], value: 'Face' },
  { name: 'Color', options: ['Vert', 'Mesh', 'User-Def'], value: 'Vert', swatch: true },
  { name: 'Back-Face', options: ['Single', 'Double', 'Fancy', 'Cull'], value: 'Single' },
  { name: 'Texture Coord', options: ['On', 'Off'], value: 'Off' },
];

function RenderOption({ name, options, value, swatch }) {
  const [selected, setSelected] = useState(value);
  return (
    <OptionRow>
      <strong>{name}</strong>
      {options.map((option) => (
        <Option key={option} type="button" $active={option === selected} onClick={() => setSelected(option)}>
          {option}
        </Option>
      ))}
      {swatch && <Swatch />}
    </OptionRow>
  );
}

function ProjectDock() {
  const [tab, setTab] = useState('tube');
  return (
    <Dock>
      <DockTitle>
        <span>Project_1</span>
        <BareButton type="button" aria-label="Float">
          <svg width="14" height="14" viewBox="0 0 14 14" fill="none" stroke="#222" strokeWidth="1.500">
            <path d="M4.500 5V1.500h8v7H9M4 2.500h9M1.500 5.500H9v7H1.500zM1 6.500h8" />
          </svg>
        </BareButton>
        <BareButton type="button" aria-label="Close">
          <svg width="12" height="12" viewBox="0 0 12 12">
            <path d="M1 1l10 10M11 1L1 11" stroke="#222" strokeWidth="2.500" />
          </svg>
        </BareButton>
      </DockTitle>
      <DockBody>
        <LayerTree>
          <LayerRow>
            <svg width="10" height="14" viewBox="0 0 10 14">
              <path d="M2 1l6 6-6 6" fill="none" stroke="#a0a0a0" strokeWidth="2" />
            </svg>
            <LayerEye aria-label="Toggle layer">
              <Icon name="eye" size={20} />
            </LayerEye>
            0
            <LayerName>obj_000006</LayerName>
            {renderTabs.map((name, i) => (
              <LayerTool key={name} type="button" aria-label={name} $active={i > 2}>
                <Icon name={name} size={16} />
              </LayerTool>
            ))}
          </LayerRow>
        </LayerTree>
        <SlotRow>
          {[1, 2, 3, 4, 1, 2, 3, 4].map((n, i) => (
            <SlotButton key={i} type="button">{n}</SlotButton>
          ))}
        </SlotRow>
        <RenderGroup>
          <legend>obj_000006.ply</legend>
          <TabRow role="tablist">
            {renderTabs.map((name) => (
              <Tab key={name} type="button" role="tab" aria-label={name} aria-selected={name === tab} $active={name === tab} onClick={() => setTab(name)}>
                <Icon name={name} size={24} />
              </Tab>
            ))}
          </TabRow>
          <TabPane>
            {renderOptions.map((option) => (
              <RenderOption key={option.name} {...option} />
            ))}
          </TabPane>
          <ApplyRow>
            <Check label="apply to all visible layers" />
          </ApplyRow>
        </RenderGroup>
        <Log>
          <div>
            <FreshLine>Successfully merged 0 wedge tex coord distant less than 0.000100</FreshLine>
            <p>Applied filter Merge Wedge Texture Coord in 34 msec</p>
            <p>{'Applied filter Transfer: Vertex Attributes to Texture (1 or 2\nmeshes) in 126 msec'}</p>
            <p>{'Saved Mesh C:/Users/14720/Desktop/aip论文/素材/obj_000006.obj in\n130 msec'}</p>
          </div>
          <ScrollBar>
            <svg width="12" height="9" viewBox="0 0 12 9">
              <path d="M1 7l5-5 5 5" fill="none" stroke="#505050" strokeWidth="2.500" />
            </svg>
            <Thumb />
            <svg width="12" height="9" viewBox="0 0 12 9">
              <path d="M1 2l5 5 5-5" fill="none" stroke="#505050" strokeWidth="2.500" />
            </svg>
          </ScrollBar>
        </Log>
      </DockBody>
    </Dock>
  );
}

function WindowsTaskBar() {
  return (
    <TaskBar>
      <TaskButton aria-label="Start" $narrow>{taskIcons.start}</TaskButton>
      <TaskButton aria-label="Search" $narrow>{taskIcons.search}</TaskButton>
      <TaskButton aria-label="Command Prompt">{taskIcons.cmd}</TaskButton>
      <TaskButton aria-label="File Explorer" $open>{taskIcons.explorer}</TaskButton>
      <TaskButton aria-label="Performance Monitor">{taskIcons.monitor}</TaskButton>
      <TaskButton aria-label="Edge" $open>{taskIcons.edge}</TaskButton>
      <TaskButton aria-label="Code" $open>{taskIcons.code}</TaskButton>
      <TaskButton aria-label="MeshLab" $current>
        <EyeLogo size={34} />
      </TaskButton>
      <Tray>
        <TrayItem $width={88}>
          <span>48℃</span>
          <span>CPU温度</span>
        </TrayItem>
        <TrayItem aria-label="Show hidden icons">
          <svg width="20" height="12" viewBox="0 0 20 12">
            <path d="M1 11l9-9 9 9" fill="none" stroke="#000" strokeWidth="1.500" />
          </svg>
        </TrayItem>
        <TrayItem aria-label="Network">
          <svg width="20" height="20" viewBox="0 0 20 20" fill="none" stroke="#000" strokeWidth="1.300">
            <path d="M1 19C1 9 9 1 19 1" stroke="#555" />
            <path d="M6 19C6 12 12 6 19 6M11 19c0-5 4-8 8-8" />
            <circle cx="17" cy="17" r="1.500" fill="#000" />
          </svg>
        </TrayItem>
        <TrayItem aria-label="Battery">
          <svg width="24" height="18" viewBox="0 0 24 18">
            <path d="M5.500 4.500h16v11h-16z" fill="#d4dcea" stroke="#000" />
            <path d="M7 6h13v8H7zM22 8h2v4h-2z" />
            <path d="M1.500 3.500h6v4l-2 2h-2l-2-2zM3 0v3M6 0v3M4.500 10v6" fill="#d4dcea" stroke="#000" strokeWidth="1.200" />
          </svg>
        </TrayItem>
        <TrayItem aria-label="Volume">
          <svg width="24" height="20" viewBox="0 0 24 20" fill="none" stroke="#000" strokeWidth="1.300">
            <path d="M1 7h4l5-5v16l-5-5H1z" />
            <path d="M13 7.500c1 1.500 1 3.500 0 5" />
            <path d="M16 5c3 3 3 7 0 10M19 3c4 4 4 10 0 14" stroke="#8a919c" />
          </svg>
        </TrayItem>
        <TrayItem aria-label="Input method">
          <svg width="22" height="24" viewBox="0 0 22 24" fill="none">
            <path d="M2 7.500h18v8H2zM11 1v22" stroke="#222" strokeWidth="3.500" />
            <path d="M2 7.500h18v8H2zM11 2v20" stroke="#fff" strokeWidth="2" />
          </svg>
        </TrayItem>
        <TrayItem $width={48} aria-label="Sogou">
          <svg width="24" height="24" viewBox="0 0 24 24">
            <path d="M1 4c0-2 1-2 2-2l16-2c2 0 2 1 2 2l3 17c0 2-1 2-2 3L6 24c-2 0-2-1-2-2z" fill="#e8562a" />
            <path d="M18 7C14 4 7 5 7 9c0 4 11 2 11 6s-8 5-12 2" fill="none" stroke="#fff" strokeWidth="3.500" />
          </svg>
        </TrayItem>
        <ClockItem $width={120}>
          <span>7:43</span>
          <span>2022/8/1</span>
        </ClockItem>
        <TrayItem $width={70} aria-label="Notifications">
          <svg width="38" height="38" viewBox="0 0 38 38">
            <path d="M1 2h24v18H17l-5 5v-5H1z" />
            <path d="M5 7h15M5 11h15M5 15h10" stroke="#fff" strokeWidth="1.200" />
            <circle cx="25" cy="26" r="11.500" fill="#b9bcc2" fillOpacity=".9" stroke="#888" strokeWidth="1.500" />
            <text x="25" y="32" textAnchor="middle" fontFamily="Open Sans, sans-serif" fontSize="17" fontWeight="700">2</text>
          </svg>
        </TrayItem>
        <DesktopEdge />
      </Tray>
      <Watermark>CSDN @SEU-WYL</Watermark>
    </TaskBar>
  );
}

export default function App() {
  return (
    <>
      <GlobalStyle />
      <SharedGradients />
      <Screen>
        <TitleBar>
          <EyeLogo size={24} />
          <Title>MeshLab 2021.07 - [Project_1]</Title>
          <FrameButton aria-label="Minimize">
            <svg width="16" height="16" viewBox="0 0 16 16"><path d="M1 8.500h14" stroke="#888" /></svg>
          </FrameButton>
          <FrameButton aria-label="Restore">
            <svg width="16" height="16" viewBox="0 0 16 16" fill="none" stroke="#888">
              <path d="M.5 4.500h11v11H.5zM4.500 4V.500h11v11H12" />
            </svg>
          </FrameButton>
          <FrameButton aria-label="Close">
            <svg width="16" height="16" viewBox="0 0 16 16"><path d="M.5.500l15 15M15.500.500l-15 15" stroke="#888" /></svg>
          </FrameButton>
        </TitleBar>
        <MenuBar>
          <EyeLogo size={23} />
          <MenuList>
            {menus.map((menu) => (
              <MenuItem key={menu}>{menu}</MenuItem>
            ))}
          </MenuList>
        </MenuBar>
        <ToolBar>
          {toolGroups.map((group, i) => (
            <ToolGroup key={i}>
              {group.map((name) =>
                name ? (
                  <ToolButton key={name} type="button" aria-label={name} $active={activeTools.includes(name)}>
                    <Icon name={name} />
                  </ToolButton>
                ) : (
                  <ToolRule key="rule" />
                )
              )}
            </ToolGroup>
          ))}
          <ToolSearch type="button" aria-label="Search">
            <svg width="32" height="34" viewBox="0 0 32 34" fill="none" stroke="#b4b4b4">
              <circle cx="13" cy="13" r="11" strokeWidth="3" />
              <path d="M21 21l9 10" strokeWidth="5" />
            </svg>
          </ToolSearch>
        </ToolBar>
        <Workspace>
          <Viewport>
            <Model />
            <InfoStrip>
              <InfoText>{'FOV: 60\nFPS:   476.2\nBO_RENDERING'}</InfoText>
              <InfoText>{'Mesh: obj_000006.ply\nVertices: 15,736\nFaces: 31,468\nSelection: v: 0 f: 0\nVC WT'}</InfoText>
            </InfoStrip>
          </Viewport>
          <ProjectDock />
        </Workspace>
        <StatusBar>
          <Progress />
          <StatusRule />
          <CardButton type="button">UNRECOGNIZED CARD</CardButton>
        </StatusBar>
        <WindowsTaskBar />
      </Screen>
      <SaveDialog />
    </>
  );
}
